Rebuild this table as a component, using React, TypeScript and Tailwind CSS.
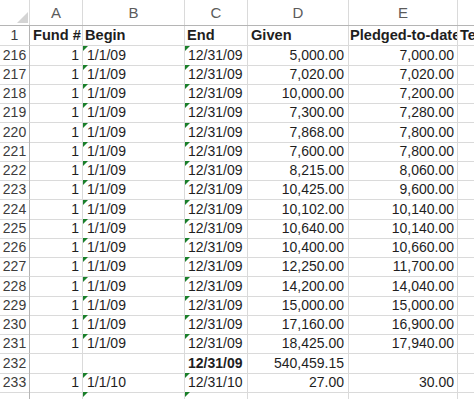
const COLS = "grid grid-cols-[30px_53px_102px_63px_101px_109px_60px]";

type Row = {
  n: number;
  a?: string;
  b?: string;
  c?: string;
  d?: string;
  e?: string;
  boldC?: boolean;
  flags?: boolean;
  hideNum?: boolean;
};

const ROWS: Row[] = [
  { n: 216, a: "1", b: "1/1/09", c: "12/31/09", d: "5,000.00", e: "7,000.00", flags: true },
  { n: 217, a: "1", b: "1/1/09", c: "12/31/09", d: "7,020.00", e: "7,020.00", flags: true },
  { n: 218, a: "1", b: "1/1/09", c: "12/31/09", d: "10,000.00", e: "7,200.00", flags: true },
  { n: 219, a: "1", b: "1/1/09", c: "12/31/09", d: "7,300.00", e: "7,280.00", flags: true },
  { n: 220, a: "1", b: "1/1/09", c: "12/31/09", d: "7,868.00", e: "7,800.00", flags: true },
  { n: 221, a: "1", b: "1/1/09", c: "12/31/09", d: "7,600.00", e: "7,800.00", flags: true },
  { n: 222, a: "1", b: "1/1/09", c: "12/31/09", d: "8,215.00", e: "8,060.00", flags: true },
  { n: 223, a: "1", b: "1/1/09", c: "12/31/09", d: "10,425.00", e: "9,600.00", flags: true },
  { n: 224, a: "1", b: "1/1/09", c: "12/31/09", d: "10,102.00", e: "10,140.00", flags: true },
  { n: 225, a: "1", b: "1/1/09", c: "12/31/09", d: "10,640.00", e: "10,140.00", flags: true },
  { n: 226, a: "1", b: "1/1/09", c: "12/31/09", d: "10,400.00", e: "10,660.00", flags: true },
  { n: 227, a: "1", b: "1/1/09", c: "12/31/09", d: "12,250.00", e: "11,700.00", flags: true },
  { n: 228, a: "1", b: "1/1/09", c: "12/31/09", d: "14,200.00", e: "14,040.00", flags: true },
  { n: 229, a: "1", b: "1/1/09", c: "12/31/09", d: "15,000.00", e: "15,000.00", flags: true },
  { n: 230, a: "1", b: "1/1/09", c: "12/31/09", d: "17,160.00", e: "16,900.00", flags: true },
  { n: 231, a: "1", b: "1/1/09", c: "12/31/09", d: "18,425.00", e: "17,940.00", flags: true },
  { n: 232, c: "12/31/09", d: "540,459.15", boldC: true },
  { n: 233, a: "1", b: "1/1/10", c: "12/31/10", d: "27.00", e: "30.00", flags: true },
  // next row only peeks in at the bottom edge
  { n: 234, flags: true, hideNum: true },
];

// little green "number stored as text" marker
function Flag() {
  return (
    <span className="absolute left-0 top-0 w-0 h-0 border-t-[5px] border-r-[5px] border-t-[#1a7f2a] border-r-transparent" />
  );
}

const cell = "relative border-r border-b border-[#dadada] overflow-hidden whitespace-nowrap";

export default function App() {
  return (
    <div
      className="w-[474px] h-[399px] overflow-hidden bg-white text-[#1e1e1e]"
      style={{ fontFamily: '"Liberation Sans", Arial, sans-serif' }}
    >
      {/* column letters */}
      <div className={`${COLS} h-[26px] border-b border-[#b5b5b5] text-[15px] text-[#5b5b5b]`}>
        <div className="relative border-r border-[#dadada]">
          <span className="absolute left-[17px] top-[12px] w-0 h-0 border-b-[11px] border-l-[11px] border-b-[#d4d4d4] border-l-transparent" />
        </div>
        {["A", "B", "C", "D", "E", ""].map((l, i) => (
          <div key={i} className="flex items-center justify-center pt-[1px] border-r border-[#dadada]">
            {l}
          </div>
        ))}
      </div>

      {/* header row */}
      <div className={`${COLS} h-[19.5px] text-[14.6px] font-bold leading-[19px]`}>
        <div className="border-r border-[#b5b5b5] border-b border-b-[#dadada] text-center font-normal text-[14px] text-[#3c3c3c]">1</div>
        <div className={`${cell} pl-[3px]`}>Fund #</div>
        <div className={`${cell} pl-[2px]`}>Begin</div>
        <div className={`${cell} pl-[2px]`}>End</div>
        <div className={`${cell} pl-[3px]`}>Given</div>
        <div className={`${cell} pl-[1px]`}>Pledged-to-date</div>
        <div className={`${cell} pl-[2px]`}>Term</div>
      </div>

      {ROWS.map((r) => (
        <div key={r.n} className={`${COLS} h-[19.25px] text-[14px] leading-[19px]`}>
          <div className="border-r border-[#b5b5b5] border-b border-b-[#dadada] text-center text-[#3c3c3c]">
            {r.hideNum ? "" : r.n}
          </div>
          <div className={`${cell} text-right pr-[3px]`}>{r.a}</div>
          <div className={`${cell} pl-[4px]`}>
            {r.flags && <Flag />}
            {r.b}
          </div>
          <div className={`${cell} pl-[3px] ${r.boldC ? "font-bold" : ""}`}>
            {r.flags && <Flag />}
            {r.c}
          </div>
          <div className={`${cell} text-right pr-[4px]`}>{r.d}</div>
          <div className={`${cell} text-right pr-[3px]`}>{r.e}</div>
          <div className={cell} />
        </div>
      ))}
    </div>
  );
}
